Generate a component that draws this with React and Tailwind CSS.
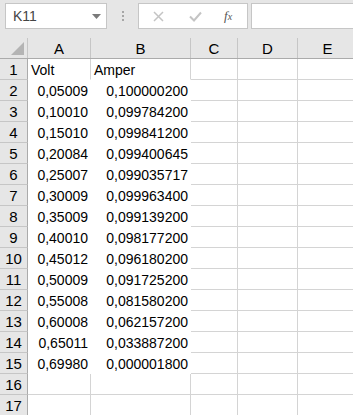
import React from "react";

const rows = [
  ["Volt", "Amper"],
  ["0,05009", "0,100000200"],
  ["0,10010", "0,099784200"],
  ["0,15010", "0,099841200"],
  ["0,20084", "0,099400645"],
  ["0,25007", "0,099035717"],
  ["0,30009", "0,099963400"],
  ["0,35009", "0,099139200"],
  ["0,40010", "0,098177200"],
  ["0,45012", "0,096180200"],
  ["0,50009", "0,091725200"],
  ["0,55008", "0,081580200"],
  ["0,60008", "0,062157200"],
  ["0,65011", "0,033887200"],
  ["0,69980", "0,000001800"],
  ["", ""],
  ["", ""],
];

const cols = [
  { name: "A", w: "w-[63px]" },
  { name: "B", w: "w-[100px]" },
  { name: "C", w: "w-[47px]" },
  { name: "D", w: "w-[60px]" },
  { name: "E", w: "w-[60px]" },
];

const Toolbar = () => (
  <div className="h-[38px] flex items-start pt-[3px] pl-[5px]">
    <div className="w-[102px] h-[26px] bg-white border border-[#c6c6c6] flex items-center justify-between pl-[7px] pr-[5px]">
      <span className="text-[14px] text-[#444]">K11</span>
      <svg width="9" height="5" viewBox="0 0 9 5"><path d="M0 0h9L4.5 5z" fill="#7a7a7a" /></svg>
    </div>
    <div className="w-[31px] h-[26px] flex flex-col items-center justify-center gap-[2px]">
      <div className="w-[2px] h-[2px] bg-[#a6a6a6]"></div>
      <div className="w-[2px] h-[2px] bg-[#a6a6a6]"></div>
      <div className="w-[2px] h-[2px] bg-[#a6a6a6]"></div>
    </div>
    <div className="w-[110px] h-[26px] bg-white border border-[#c6c6c6] flex items-center">
      <svg className="ml-[14px]" width="11" height="11" viewBox="0 0 11 11"><path d="M1 1l9 9M10 1l-9 9" stroke="#c4c4c4" strokeWidth="1.5" /></svg>
      <svg className="ml-[25px]" width="13" height="11" viewBox="0 0 13 11"><path d="M1 5.5l4 4 7-8" stroke="#c4c4c4" strokeWidth="2" fill="none" /></svg>
      <span className="ml-[22px] text-[13px] italic text-[#555] font-['Liberation_Serif',serif]">f<span className="text-[10px]">x</span></span>
    </div>
    <div className="ml-[3px] flex-1 h-[26px] bg-white border border-[#c6c6c6] border-r-0"></div>
  </div>
);

export default function App() {
  return (
    <div className="w-[353px] h-[415px] overflow-hidden bg-[#e6e6e6] font-['Liberation_Sans',sans-serif] text-[14px] text-black">
      <Toolbar />
      <div className="flex h-[21px] bg-[#e6e6e6] border-b border-[#ababab]">
        <div className="w-[28px] shrink-0 relative border-r border-[#c6c6c6]">
          <svg className="absolute right-[3px] bottom-[3px]" width="13" height="13" viewBox="0 0 13 13"><path d="M13 0V13H0z" fill="#b4b4b4" /></svg>
        </div>
        {cols.map((c) => (
          <div key={c.name} className={`${c.w} shrink-0 border-r border-[#c6c6c6] flex items-center justify-center leading-none text-[15px]`}>
            {c.name}
          </div>
        ))}
      </div>
      {rows.map((r, i) => {
        const filled = i >= 1 && i <= 14;
        const first = i === 0;
        const cellBorder = filled ? "border-white" : first ? "border-r-[#d4d4d4] border-b-white" : "border-[#d4d4d4]";
        return (
          <div key={i} className="flex h-[21px] bg-white">
            <div className="w-[28px] shrink-0 bg-[#e6e6e6] border-r border-b border-r-[#ababab] border-b-[#c6c6c6] flex items-center justify-center leading-none text-[15px]">
              {i + 1}
            </div>
            <div className={`w-[63px] shrink-0 border-r border-b flex items-center leading-none pt-[1px] ${cellBorder} ${first ? "justify-start pl-[3px]" : "justify-end pr-[2px]"}`}>
              {r[0]}
            </div>
            <div className={`w-[100px] shrink-0 border-r border-b flex items-center leading-none pt-[1px] ${cellBorder} ${first ? "justify-start pl-[3px]" : "justify-end pr-[2px]"}`}>
              {r[1]}
            </div>
            <div className="w-[47px] shrink-0 border-r border-b border-[#d4d4d4]"></div>
            <div className="w-[60px] shrink-0 border-r border-b border-[#d4d4d4]"></div>
            <div className="w-[60px] shrink-0 border-r border-b border-[#d4d4d4]"></div>
          </div>
        );
      })}
    </div>
  );
}
